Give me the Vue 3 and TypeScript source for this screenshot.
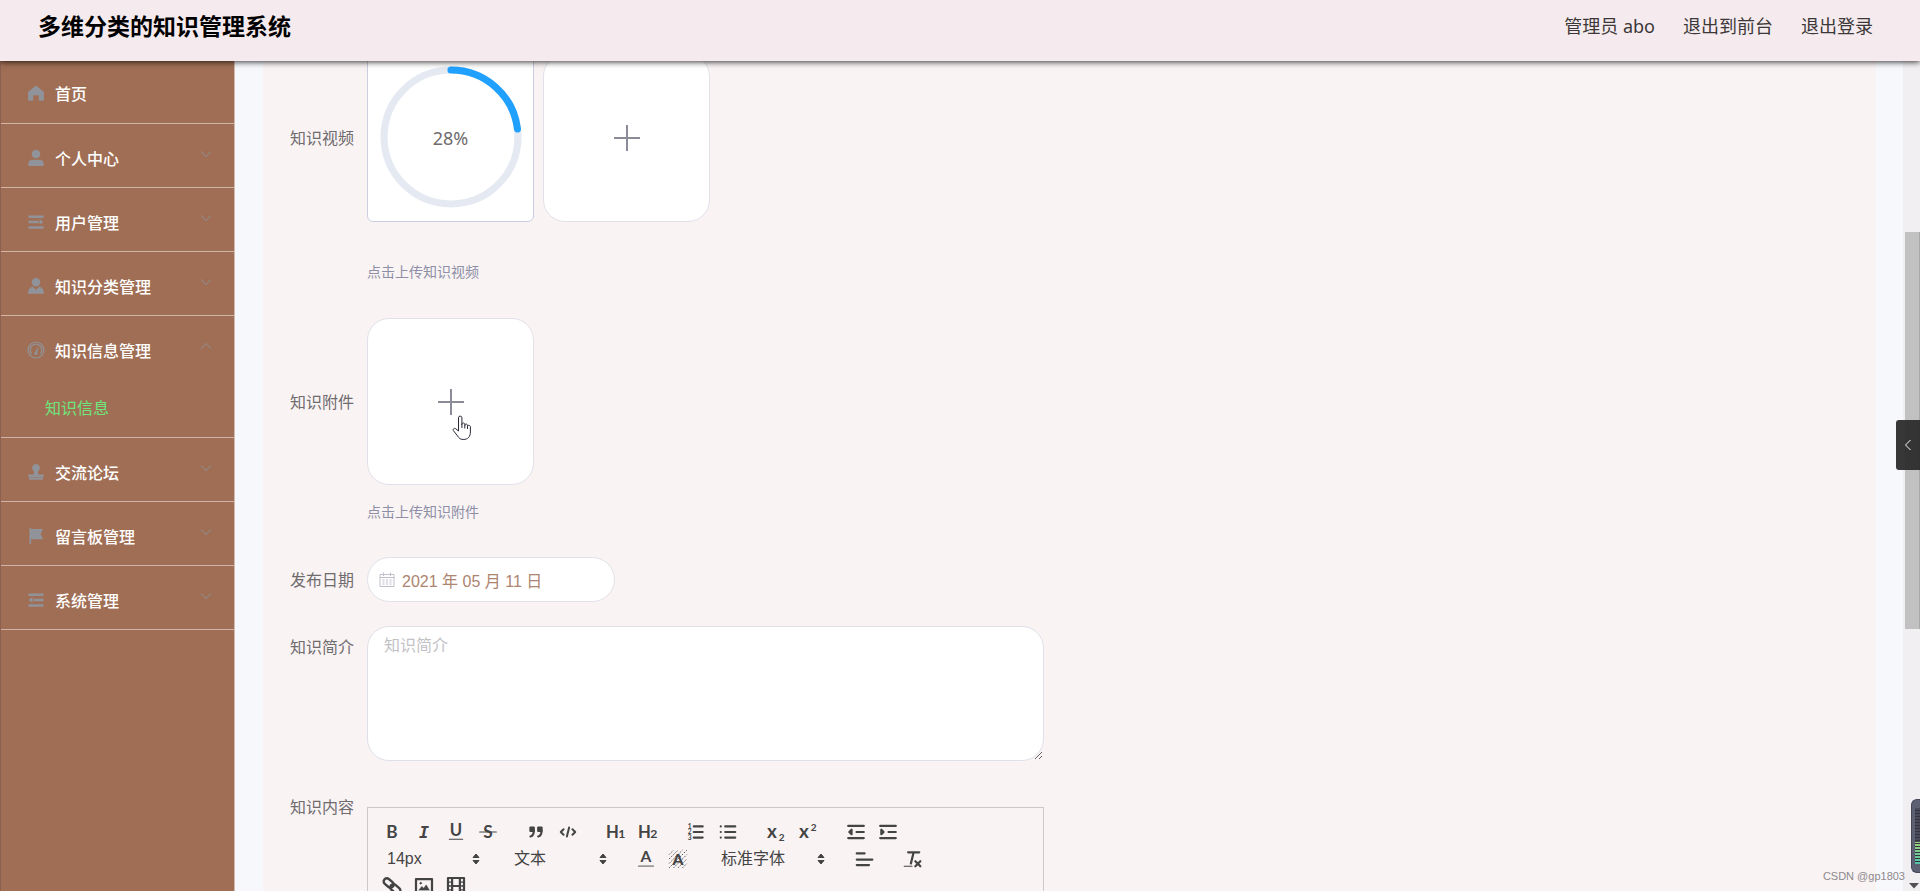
<script setup lang="ts">
import { computed, ref } from 'vue'

interface MenuItem {
  title: string
  icon: string
  children?: string[]
  open?: boolean
}

const navIcons: Record<string, string> = {
  home: '<path d="M8 .6 15.4 6.6a1.2 1.2 0 0 1 .5 1V14.8a.9.9 0 0 1-.9.9h-4.2v-4.6a.8.8 0 0 0-.8-.8H6a.8.8 0 0 0-.8.8v4.6H1a.9.9 0 0 1-.9-.9V7.600a1.200 1.200 0 0 1 .5-1Z"/>',
  user: '<circle cx="8" cy="4" r="4.300"/><path d="M.2 15.200c0-4 1.800-5.400 4.400-5.400h6.800c2.600 0 4.400 1.400 4.400 5.400a.8.8 0 0 1-.8.8H1a.8.8 0 0 1-.8-.8Z"/>',
  unfold: '<path d="M.5 1.500h15v2.400H.5ZM.5 6.800h10v2.400H.5ZM.5 12.300h15v2.400H.5ZM11.500 5l4 2.900-4 2.900Z"/>',
  custom: '<circle cx="8" cy="4.200" r="4.200"/><path d="M0 15.800c0-4.200 2-6.200 4.700-7.300L8 12l3.300-3.500c2.700 1.100 4.700 3.100 4.700 7.300Z"/>',
  gauge: '<g fill="none" stroke="#909399"><circle cx="8" cy="8" r="8" stroke-width="1.200"/><path d="M3.600 11.800A5.800 5.800 0 1 1 12.400 11.800" stroke-width="1.300"/></g><path d="M10.600 3.800 9.200 11a1.500 1.500 0 1 1-2-.9Z"/>',
  check: '<path d="M8 0a4 4 0 0 1 2.300 7.200c-.6.9-.4 2.300.2 3.300H15a.7.7 0 0 1 .7.7V13H.3v-1.800a.7.7 0 0 1 .7-.7h4.500c.6-1 .8-2.400.2-3.300A4 4 0 0 1 8 0ZM1 13.500h14v2.300H1Z"/>',
  flag: '<path d="M1.500 0h1.600v1h12l-2.600 5 2.600 5.200h-12V16H1.500Z"/>',
  fold: '<path d="M.5 1.500h15v2.400H.5ZM5.500 6.800h10v2.400h-10ZM.5 12.300h15v2.400H.5ZM4.500 5l-4 2.900 4 2.900Z"/>',
}

const menu = ref<MenuItem[]>([
  { title: '首页', icon: 'home' },
  { title: '个人中心', icon: 'user', children: [] },
  { title: '用户管理', icon: 'unfold', children: [] },
  { title: '知识分类管理', icon: 'custom', children: [] },
  { title: '知识信息管理', icon: 'gauge', children: ['知识信息'], open: true },
  { title: '交流论坛', icon: 'check', children: [] },
  { title: '留言板管理', icon: 'flag', children: [] },
  { title: '系统管理', icon: 'fold', children: [] },
])

function toggle(item: MenuItem) {
  if (item.children) item.open = !item.open
}

const letter = 'stroke="none" font-family="Lato, sans-serif" font-weight="700"'
const toolIcons: Record<string, string> = {
  bold: `<text x="9" y="14.500" font-size="15.500" text-anchor="middle" ${letter}>B</text>`,
  italic: '<text x="9" y="14.500" font-size="15" text-anchor="middle" stroke="none" font-family="DejaVu Sans Mono, monospace" font-weight="700" font-style="oblique">I</text>',
  underline: `<text x="9" y="13" font-size="15" text-anchor="middle" ${letter}>U</text><path d="M3 15.500h12" stroke-width="1"/>`,
  strike: `<text x="9" y="14.500" font-size="15.500" text-anchor="middle" ${letter}>S</text><path d="M1.500 9h15" stroke-width="1"/>`,
  quote: '<path d="M4 5h3v3H4ZM11 5h3v3h-3Z"/><path d="M7 8c0 4-3 5-3 5M14 8c0 4-3 5-3 5" fill="none"/>',
  code: '<path d="M5 6.500 2.500 9 5 11.500M13 6.500 15.500 9 13 11.500M10 5 8 13" fill="none" stroke-width="1.800"/>',
  h1: `<text x="0" y="14.500" font-size="15" ${letter}>H</text><text x="11" y="14.500" font-size="11" ${letter}>1</text>`,
  h2: `<text x="0" y="14.500" font-size="15" ${letter}>H</text><text x="11" y="14.500" font-size="11" ${letter}>2</text>`,
  ordered: `<path d="M7 4h8M7 9h8M7 14h8"/><text x="1.500" y="6" font-size="6" ${letter}>1</text><text x="1.500" y="11" font-size="6" ${letter}>2</text><text x="1.500" y="16.500" font-size="6" ${letter}>3</text>`,
  bullet: '<path d="M6.500 4h9M6.500 9h9M6.500 14h9M2.500 4h.01M2.500 9h.01M2.500 14h.01"/>',
  sub: `<text x="1" y="14" font-size="17" ${letter}>x</text><text x="11.500" y="17" font-size="9" ${letter}>2</text>`,
  sup: `<text x="1" y="14" font-size="17" ${letter}>x</text><text x="11.500" y="8" font-size="9" ${letter}>2</text>`,
  outdent: '<path d="M2 3.500h14M2 14.500h14M9.500 9H16"/><path d="M5 7v4L3 9Z"/>',
  indent: '<path d="M2 3.500h14M2 14.500h14M9.500 9H16"/><path d="M3 7v4l2-2Z"/>',
  color: `<text x="9" y="12" font-size="14" text-anchor="middle" ${letter}>A</text><path d="M2.500 15.500h13" stroke="#999" stroke-width="1.600"/>`,
  background: `<path d="M1 5 5 1M1 9 9 1M1 13 13 1M1 17 17 1M5 17 17 5M9 17 17 9M13 17 17 13" stroke-width=".8" stroke-dasharray="1.500 1.200" stroke-linecap="butt"/><text x="9" y="14.500" font-size="14" text-anchor="middle" stroke="none" font-family="Lato, sans-serif" font-weight="900">A</text>`,
  align: '<path d="M2.500 4h7M2.500 9.500h14M2.500 14.500h11"/>',
  clean: '<path d="M5.500 3h10M10.500 3 8 13"/><path d="M2 15.500h7" stroke-width="1"/><path d="m12 11 4.500 4.500M16.500 11 12 15.500" />',
  link: '<g fill="none" stroke-width="2.200"><rect x="1" y="3.500" width="10" height="5.600" rx="2.800" transform="rotate(40 6 6.300)"/><rect x="7" y="8.800" width="10" height="5.600" rx="2.800" transform="rotate(40 12 11.600)"/></g>',
  image: '<rect x="1.800" y="2.800" width="14.400" height="12.400" fill="none"/><circle cx="6" cy="6.500" r=".8" stroke-width=".5"/><path d="m4.500 12.500 2.500-3 1.800 1.500L11 8l2.700 4.500Z" stroke-width=".5"/>',
  video: '<rect x="1.800" y="1.800" width="14.400" height="14.400" fill="none"/><path d="M5.500 2v14M12.500 2v14M5.500 9h7"/><path d="M2 5.500h3M2 9h3M2 12.500h3M13 5.500h3M13 9h3M13 12.500h3" stroke-width="1.200"/>',
}

type Tool = { icon: string; name: string } | { select: string; options: string[]; wide?: boolean }

const toolRows: Tool[][][] = [
  [
    [{ icon: 'bold', name: '加粗' }, { icon: 'italic', name: '斜体' }, { icon: 'underline', name: '下划线' }, { icon: 'strike', name: '删除线' }],
    [{ icon: 'quote', name: '引用' }, { icon: 'code', name: '代码' }],
    [{ icon: 'h1', name: '一级标题' }, { icon: 'h2', name: '二级标题' }],
    [{ icon: 'ordered', name: '有序列表' }, { icon: 'bullet', name: '无序列表' }],
    [{ icon: 'sub', name: '下标' }, { icon: 'sup', name: '上标' }],
    [{ icon: 'outdent', name: '减少缩进' }, { icon: 'indent', name: '增加缩进' }],
  ],
  [
    [{ select: '字号', options: ['14px', '16px', '18px'] }],
    [{ select: '段落', options: ['文本', '标题1', '标题2'] }],
    [{ icon: 'color', name: '文字颜色' }, { icon: 'background', name: '背景颜色' }],
    [{ select: '字体', options: ['标准字体', '宋体', '黑体'], wide: true }],
    [{ icon: 'align', name: '对齐' }],
    [{ icon: 'clean', name: '清除格式' }],
  ],
  [[{ icon: 'link', name: '链接' }, { icon: 'image', name: '图片' }, { icon: 'video', name: '视频' }]],
]

const publishDate = ref('2021 年 05 月 11 日')
const summary = ref('')
const uploaded = ref(28)
const arcFraction = ref(0.23)
const ringLength = 2 * Math.PI * 66
const ringDash = computed(() => `${ringLength * arcFraction.value} ${ringLength}`)

const scroll = { start: 20.6, size: 47.8 }
</script>

<template>
  <div class="page">
    <header class="topbar">
      <h1>多维分类的知识管理系统</h1>
      <nav class="account">
        <span>管理员 abo</span>
        <a href="#front">退出到前台</a>
        <a href="#logout">退出登录</a>
      </nav>
    </header>

    <div class="body">
      <aside class="sidebar">
        <ul>
          <li v-for="item in menu" :key="item.title">
            <button class="entry" type="button" @click="toggle(item)">
              <svg class="entry-icon" viewBox="-1 -1 18 18" v-html="navIcons[item.icon]" />
              <span>{{ item.title }}</span>
              <svg v-if="item.children" class="entry-arrow" :class="{ up: item.open }" viewBox="0 0 12 12">
                <path d="M1 3.500 6 8.500 11 3.500" />
              </svg>
            </button>
            <template v-if="item.open">
              <a v-for="child in item.children" :key="child" class="child" href="#knowledge">{{ child }}</a>
            </template>
          </li>
        </ul>
      </aside>

      <main class="content">
        <form class="card" @submit.prevent>
          <div class="field video">
            <label for="video">知识视频</label>
            <div>
              <div class="tiles">
                <div class="progress">
                  <svg viewBox="0 0 140 140">
                    <circle class="ring" cx="70" cy="70" r="66" />
                    <circle class="arc" cx="70" cy="70" r="66" :stroke-dasharray="ringDash" transform="rotate(-90 70 70)" />
                  </svg>
                  <span>{{ uploaded }}%</span>
                </div>
                <button id="video" class="tile" type="button" aria-label="上传知识视频">
                  <svg class="plus" viewBox="0 0 28 28"><path d="M14 1v26M1 14h26" /></svg>
                </button>
              </div>
              <p class="hint">点击上传知识视频</p>
            </div>
          </div>

          <div class="field file">
            <label for="file">知识附件</label>
            <div>
              <button id="file" class="tile" type="button" aria-label="上传知识附件">
                <svg class="plus" viewBox="0 0 28 28"><path d="M14 1v26M1 14h26" /></svg>
                <svg class="pointer" viewBox="0 0 20 26">
                  <path d="M6.500 16V2.800a1.700 1.700 0 0 1 3.400 0V9.500c0-2 2.900-2 2.900 0v1c0-2 2.700-1.800 2.700 0v1c0-1.700 2.900-1.500 2.900.3V17c0 4.500-2.400 7.500-7.200 7.500-3 0-4.300-1.500-5.600-3.500L1.300 15.500C.5 14 2.500 12.500 4 14Z" fill="#fff" />
                  <path d="M9.900 9v4M12.800 10v3.500M15.500 11v3" />
                </svg>
              </button>
              <p class="hint">点击上传知识附件</p>
            </div>
          </div>

          <div class="field date">
            <label for="date">发布日期</label>
            <div class="date-box">
              <svg viewBox="0 0 16 16">
                <path d="M1 2.500h14v12H1ZM1 5.500h14M4.500 .5v3.500M11.500 .5v3.500M3.500 8h2M7 8h2M10.500 8h2M3.500 10h2M7 10h2M10.500 10h2M3.500 12h2M7 12h2M10.500 12h2" />
              </svg>
              <input id="date" v-model="publishDate" type="text" />
            </div>
          </div>

          <div class="field summary">
            <label for="summary">知识简介</label>
            <textarea id="summary" v-model="summary" placeholder="知识简介"></textarea>
          </div>

          <div class="field rich">
            <span class="label">知识内容</span>
            <div class="editor">
              <div v-for="(row, r) in toolRows" :key="r" class="tool-row">
                <div v-for="(group, g) in row" :key="g" class="tool-group">
                  <template v-for="(tool, t) in group" :key="t">
                    <button v-if="'icon' in tool" type="button" :aria-label="tool.name">
                      <svg class="tool-icon" viewBox="0 0 18 18" v-html="toolIcons[tool.icon]" />
                    </button>
                    <span v-else class="picker" :class="{ wide: tool.wide }">
                      <select :aria-label="tool.select">
                        <option v-for="option in tool.options" :key="option">{{ option }}</option>
                      </select>
                      <svg viewBox="0 0 8 12"><path d="M4 1 7 4.500H1ZM4 11 1 7.500h6Z" /></svg>
                    </span>
                  </template>
                </div>
              </div>
            </div>
          </div>
        </form>
      </main>

      <div class="scrollbar">
        <div class="thumb" :style="{ top: scroll.start + '%', height: scroll.size + '%' }"></div>
        <svg viewBox="0 0 10 6"><path d="M0 0h10L5 5.500Z" /></svg>
      </div>
    </div>

    <button class="drawer" type="button" aria-label="展开">
      <svg viewBox="0 0 8 12"><path d="M6.500 1 1.500 6 6.500 11" /></svg>
    </button>
    <div class="meter"><i></i></div>
    <span class="watermark">CSDN @gp1803</span>
  </div>
</template>

<style>
body {
  margin: 0;
  overflow: hidden;
}
</style>

<style scoped>
* {
  box-sizing: border-box;
}

.page {
  position: relative;
  display: flex;
  flex-direction: column;
  height: 100vh;
  overflow: hidden;
  font-family: 'Noto Sans', 'Noto Sans CJK SC', sans-serif;
  font-size: 16px;
  color: #706c6e;
}

button,
input,
select,
textarea {
  font: inherit;
  color: inherit;
  border: 0;
  margin: 0;
  padding: 0;
  background: none;
  outline: none;
}

a {
  color: inherit;
  text-decoration: none;
}

.topbar {
  position: relative;
  z-index: 2;
  flex: none;
  display: flex;
  justify-content: space-between;
  height: 61px;
  padding: 0 47px 0 38px;
  line-height: 52px;
  background: #f5ebee;
  box-shadow: 0 1px 6px rgba(0, 0, 0, 0.8);
}

.topbar h1 {
  margin: 0;
  font-size: 23px;
  font-weight: 700;
  color: #000;
}

.account {
  display: flex;
  gap: 28px;
  font-size: 18px;
  color: #3c3838;
}

.body {
  flex: 1;
  min-height: 0;
  display: flex;
  background: #f6f8fc;
}

.sidebar {
  flex: none;
  width: 235px;
  background: #a06e55;
  border-right: 1px solid #d2bcb2;
  border-left: 1px solid #8d6150;
}

.sidebar ul {
  margin: -1px 0 0;
  padding: 0;
  list-style: none;
}

.sidebar li {
  border-bottom: 1px solid #d0b5aa;
}

.entry {
  display: flex;
  align-items: center;
  width: 100%;
  height: 63px;
  padding: 4px 22px 0 26px;
  color: #fff;
  font-weight: 500;
  text-align: left;
}

.sidebar li:first-child .entry {
  padding-top: 2px;
}

.entry-icon {
  width: 18px;
  height: 18px;
  margin-right: 10px;
  fill: #909399;
  overflow: visible;
}

.entry-arrow {
  width: 12px;
  height: 12px;
  margin: 0 0 8px auto;
  fill: none;
  stroke: #909399;
  stroke-width: 1px;
}

.entry-arrow.up {
  transform: rotate(180deg);
}

.child {
  display: block;
  height: 58px;
  padding-left: 44px;
  line-height: 58px;
  color: #6ee67c;
}

.content {
  flex: 1;
  min-width: 0;
  padding: 0 27px 0 28px;
  overflow: hidden;
}

.card {
  margin-top: -7px;
  padding: 0 27px;
  background: #f9f3f4;
}

.field {
  display: flex;
  gap: 13px;
}

.field > label,
.label {
  flex: none;
  width: 64px;
  line-height: 24px;
  white-space: nowrap;
}

.video > label,
.file > label {
  padding-top: 72px;
}

.video {
  height: 264px;
}

.video .hint {
  margin-top: 39px;
}

.file {
  height: 239px;
}

.tiles {
  display: flex;
  gap: 9px;
}

.progress {
  display: grid;
  place-items: center;
  width: 167px;
  height: 168px;
  background: #fff;
  border: 1px solid #c9cfe0;
  border-radius: 6px;
}

.progress > * {
  grid-area: 1 / 1;
}

.progress svg {
  width: 142px;
  height: 142px;
  margin-bottom: 2px;
  fill: none;
  stroke-width: 7px;
  stroke-linecap: round;
}

.progress span {
  font-size: 18px;
}

.ring {
  stroke: #e5e9f2;
}

.arc {
  stroke: #20a0ff;
}

.tile {
  position: relative;
  display: grid;
  place-items: center;
  width: 167px;
  height: 167px;
  background: #fff;
  border: 1px solid #e2e1ea;
  border-radius: 22px;
  cursor: pointer;
}

.tiles .tile {
  height: 168px;
}

.plus {
  width: 28px;
  height: 28px;
  fill: none;
  stroke: #8c8c99;
  stroke-width: 2px;
}

.pointer {
  position: absolute;
  left: 84px;
  top: 96px;
  width: 20px;
  height: 26px;
  fill: none;
  stroke: #2b2b38;
  stroke-width: 1px;
}

.hint {
  margin: 16px 0 0;
  font-size: 14px;
  line-height: 22px;
  color: #8c8fa6;
}

.date {
  height: 69px;
}

.date > label {
  padding-top: 11px;
}

.date-box {
  display: flex;
  align-items: center;
  gap: 7px;
  width: 248px;
  height: 45px;
  padding: 0 16px 0 11px;
  background: #fff;
  border: 1px solid #e2e1ea;
  border-radius: 23px;
  font-family: 'Liberation Sans', 'Noto Sans CJK SC', sans-serif;
  color: #ad8470;
}

.date-box svg {
  flex: none;
  width: 16px;
  height: 16px;
  fill: none;
  stroke: #c0c0ca;
}

.date-box input {
  flex: 1;
  min-width: 0;
}

.summary {
  height: 169px;
}

.summary > label {
  padding-top: 9px;
}

textarea {
  width: 677px;
  height: 135px;
  padding: 6px 16px;
  line-height: 24px;
  background: #fff;
  border: 1px solid #e0e0ea;
  border-radius: 22px;
  resize: both;
}

textarea::placeholder {
  color: #c2c2c6;
}

.rich .editor {
  margin-top: 12px;
}

.editor {
  width: 677px;
  height: 400px;
  padding: 10px 8px;
  border: 1px solid #cbc7ca;
  color: #444;
  font-family: 'Liberation Sans', 'Noto Sans CJK SC', sans-serif;
}

.tool-row {
  display: flex;
  gap: 16px;
}

.tool-group {
  display: flex;
}

.tool-group button {
  display: grid;
  place-items: center;
  width: 32px;
  height: 27px;
}

.tool-icon {
  width: 20px;
  height: 20px;
  fill: #444;
  stroke: #444;
  stroke-width: 2px;
  stroke-linecap: round;
  stroke-linejoin: round;
  overflow: visible;
}

.picker {
  display: grid;
  align-items: center;
  width: 111px;
  height: 27px;
}

.picker.wide {
  width: 122px;
}

.picker > * {
  grid-area: 1 / 1;
}

.picker select {
  appearance: none;
  width: 100%;
  height: 25px;
  padding-left: 11px;
}

.picker svg {
  justify-self: end;
  width: 8px;
  height: 12px;
  margin-right: 7px;
  fill: #444;
  stroke: #444;
  stroke-linejoin: round;
  pointer-events: none;
}

.scrollbar {
  position: relative;
  flex: none;
  display: flex;
  flex-direction: column;
  justify-content: flex-end;
  align-items: center;
  width: 17px;
  padding: 0 0 2px 4px;
  background: #f1eff2;
}

.thumb {
  position: absolute;
  left: 2px;
  right: 0;
  background: #c1c1c1;
  border-right: 1px solid #a8a8a8;
}

.scrollbar svg {
  width: 10px;
  height: 6px;
  fill: #505050;
}

.drawer {
  position: absolute;
  z-index: 3;
  right: 0;
  top: 420px;
  display: grid;
  place-items: center;
  width: 24px;
  height: 50px;
  background: rgba(42, 42, 42, 0.94);
  border-radius: 3px 0 0 3px;
}

.drawer svg {
  width: 8px;
  height: 12px;
  fill: none;
  stroke: #fff;
}

.meter {
  position: absolute;
  right: 0;
  bottom: 18px;
  width: 9px;
  height: 74px;
  padding: 8px 0 8px 3px;
  background: #5d5f73;
  border: 1px solid #454654;
  border-right: 0;
  border-radius: 6px 0 0 6px;
}

.meter i {
  display: block;
  height: 100%;
  background:
    repeating-linear-gradient(transparent 0 2px, #33343f 2px 3px),
    linear-gradient(#4a4b5a 0 60%, #9fd07a 60%, #4fc4a8);
}

.watermark {
  position: absolute;
  right: 15px;
  bottom: 6px;
  font-family: 'Liberation Sans', sans-serif;
  font-size: 11px;
  line-height: 18px;
  color: #8d898c;
}
</style>
